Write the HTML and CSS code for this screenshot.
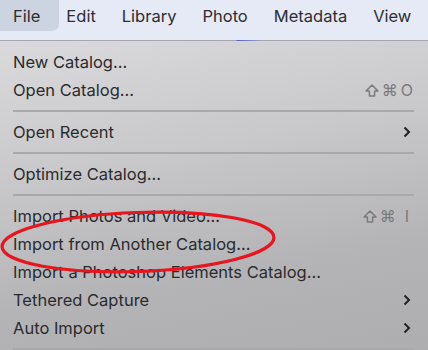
FILE: index.html
```html
<!DOCTYPE html>
<html lang="en">
<head>
  <meta charset="UTF-8" />
  <meta name="viewport" content="width=device-width, initial-scale=1.0" />
  <title>File Menu</title>
  <link rel="stylesheet" href="styles.css">
</head>
<body>
  <div class="screen">
    <nav class="menubar">
      <span class="menu-title active">File</span>
      <span class="menu-title">Edit</span>
      <span class="menu-title">Library</span>
      <span class="menu-title">Photo</span>
      <span class="menu-title">Metadata</span>
      <span class="menu-title">View</span>
    </nav>
    <div class="menubar-line"></div>
    <ul class="dropdown">
      <li class="item"><span>New Catalog...</span></li>
      <li class="item"><span>Open Catalog...</span>
        <span class="shortcut">
          <svg class="shift" viewBox="0 0 14 13"><path d="M7 1 L13 7 L9.6 7 L9.6 12 L4.4 12 L4.4 7 L1 7 Z" /></svg>
          <span>⌘</span><span>O</span>
        </span>
      </li>
      <li class="sep"></li>
      <li class="item"><span>Open Recent</span>
        <svg class="chevron" viewBox="0 0 8 12"><path d="M1.5 1.5 L6 6 L1.5 10.5" /></svg>
      </li>
      <li class="sep"></li>
      <li class="item"><span>Optimize Catalog...</span></li>
      <li class="sep"></li>
      <li class="item"><span>Import Photos and Video...</span>
        <span class="shortcut">
          <svg class="shift" viewBox="0 0 14 13"><path d="M7 1 L13 7 L9.6 7 L9.6 12 L4.4 12 L4.4 7 L1 7 Z" /></svg>
          <span>⌘</span><span class="key-i">I</span>
        </span>
      </li>
      <li class="item"><span>Import from Another Catalog...</span></li>
      <li class="item"><span>Import a Photoshop Elements Catalog...</span></li>
      <li class="item"><span>Tethered Capture</span>
        <svg class="chevron" viewBox="0 0 8 12"><path d="M1.5 1.5 L6 6 L1.5 10.5" /></svg>
      </li>
      <li class="item"><span>Auto Import</span>
        <svg class="chevron" viewBox="0 0 8 12"><path d="M1.5 1.5 L6 6 L1.5 10.5" /></svg>
      </li>
      <li class="sep"></li>
    </ul>
    <!-- red circle drawn over the menu -->
    <svg class="markup" width="428" height="350" viewBox="0 0 428 350">
      <ellipse cx="138" cy="242" rx="136" ry="29.5" transform="rotate(-2 138 242)" />
    </svg>
  </div>
</body>
</html>
```

FILE: styles.css
```css
body {
  margin: 0;
  font-family: Inter, "Noto Sans", sans-serif;
  background: #b8b8ba;
}
.screen {
  position: relative;
  width: 428px;
  height: 350px;
  overflow: hidden;
}
.menubar {
  display: flex;
  height: 40px;
  background: #e5eaf6;
  font-size: 16.5px;
  color: #2e2e30;
}
.menu-title {
  padding: 4px 13px 0 13px;
  height: 27px;
  line-height: 25px;
}
.menu-title.active {
  background: #ccd3e1;
  border-radius: 0 0 7px 0;
  padding-right: 19px;
  margin-right: -6px;
}
.menubar-line {
  height: 1px;
  background: linear-gradient(90deg, #a4a7ae 0, #a4a7ae 236px, #5460c8 237px, #7f88c8 252px, #a4a7ae 262px, #a4a7ae 100%);
}
.dropdown {
  list-style: none;
  margin: 0;
  padding: 7px 0 0;
  height: 310px;
  background: linear-gradient(170deg, #dadadc 0%, #c9c9cb 35%, #b4b4b6 70%, #adadaf 100%);
  color: #2b2b2d;
  font-size: 16.5px;
}
.item {
  display: flex;
  justify-content: space-between;
  align-items: center;
  height: 28px;
  padding: 0 16px 0 13px;
}
.shortcut {
  display: flex;
  align-items: center;
  gap: 3px;
  margin-right: -1px;
  color: #7b7b7e;
  font-size: 16px;
}
.shortcut .shift {
  width: 14px;
  height: 13px;
  fill: none;
  stroke: #7b7b7e;
  stroke-width: 1.5;
  stroke-linejoin: round;
}
.shortcut .key-i {
  margin-left: 6px;
  margin-right: 4px;
}
.chevron {
  width: 8px;
  height: 12px;
  margin-right: 1px;
  fill: none;
  stroke: #222;
  stroke-width: 2;
}
.sep {
  height: 2px;
  margin: 6px 14px 6px 13px;
  background: #a9a9ab;
}
.markup {
  position: absolute;
  left: 0;
  top: 0;
  pointer-events: none;
}
.markup ellipse {
  fill: none;
  stroke: #e8141e;
  stroke-width: 3.2;
}
```
